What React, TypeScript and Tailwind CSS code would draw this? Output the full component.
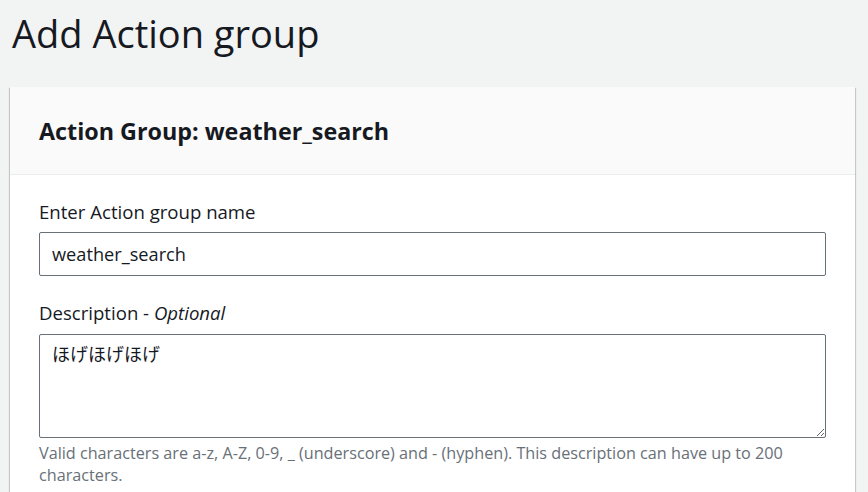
import React from 'react';

const font = { fontFamily: '"Open Sans", "Noto Sans CJK JP", sans-serif' };

export default function App() {
  return (
    <div className="min-h-screen w-full bg-[#f2f3f3] text-[#16191f]" style={font}>
      <h1 className="pl-[12px] pt-[9px] text-[38px] leading-[48px] font-normal">Add Action group</h1>

      <div className="ml-[10px] mr-[13px] mt-[30px] bg-white shadow-[0_1px_1px_0_rgba(0,28,36,0.3),1px_1px_1px_0_rgba(0,28,36,0.15),-1px_1px_1px_0_rgba(0,28,36,0.15)]">
        {/* Header */}
        <div className="h-[88px] bg-[#fafafa] border-b border-[#eaeded] flex items-center px-[29px]">
          <h2 className="text-[23.3px] font-bold leading-[30px]">Action Group: weather_search</h2>
        </div>

        {/* Body */}
        <div className="px-[29px] pt-[24px] pb-[20px] flex flex-col">
          <label className="text-[18.6px] leading-[26px] mb-[7px]">Enter Action group name</label>
          <input
            className="h-[44px] w-full border border-[#687078] rounded-[2px] bg-white px-[12px] text-[18.2px] outline-none"
            style={font}
            defaultValue="weather_search"
          />

          <label className="text-[18.6px] leading-[26px] mt-[24px] mb-[8px]">
            Description - <i>Optional</i>
          </label>
          <textarea
            className="h-[104px] w-full border border-[#687078] rounded-[2px] bg-white px-[12px] py-[6px] text-[18px] leading-[26px] outline-none"
            style={font}
            defaultValue="ほげほげほげ"
          />
          <p className="mt-[4px] text-[16.2px] leading-[22px] text-[#687078]">
            Valid characters are a-z, A-Z, 0-9, _ (underscore) and - (hyphen). This description can have up to 200 characters.
          </p>
        </div>
      </div>
    </div>
  );
}
